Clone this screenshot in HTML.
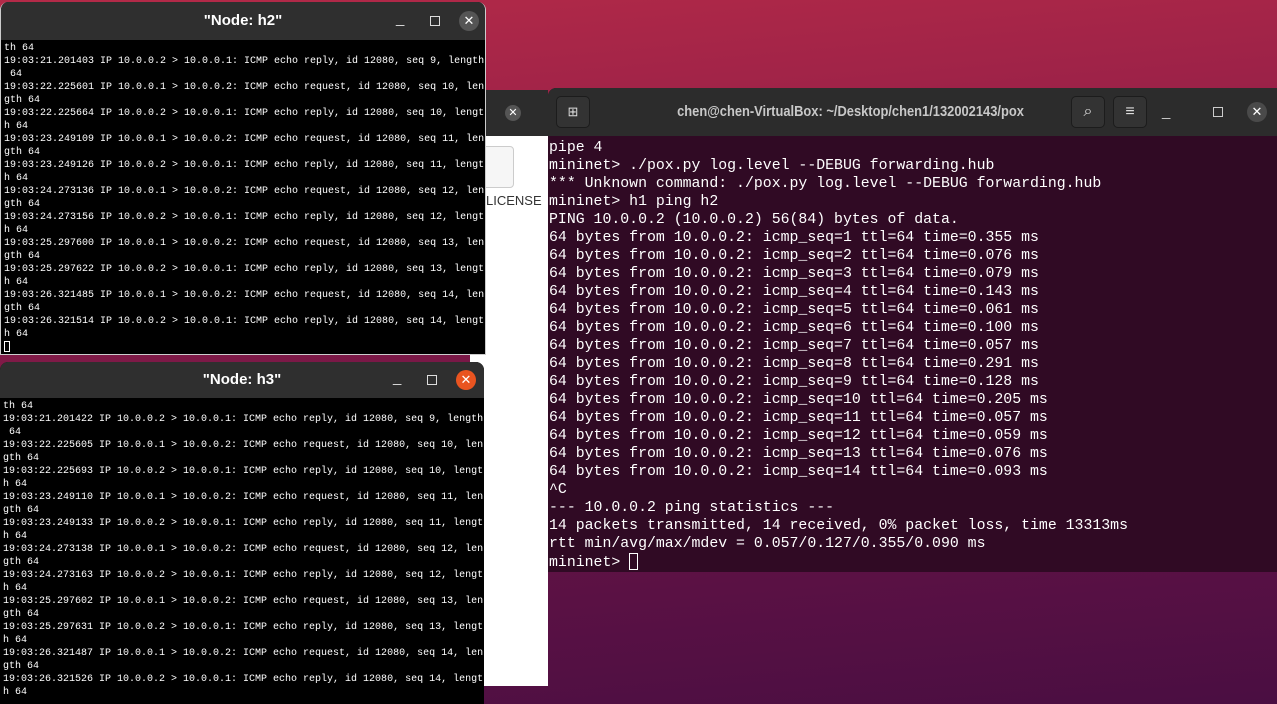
<!DOCTYPE html>
<html><head><meta charset="utf-8"><style>
*{margin:0;padding:0;box-sizing:border-box}
body{width:1277px;height:704px;overflow:hidden;position:relative;background:linear-gradient(175deg,#b42a48 0%,#9a2148 25%,#6a1446 60%,#4a0e42 100%);font-family:"Liberation Sans",sans-serif}
.win{position:absolute;background:#000;overflow:hidden}
.tb{position:absolute;left:0;right:0;top:0;background:#2f2f2f;color:#fff;font-weight:bold;font-size:15px;text-align:center}
.xt{position:absolute;left:0;right:0;bottom:0;color:#fff;font-family:"Liberation Mono",monospace;font-size:10px;line-height:13px;white-space:pre;padding-left:3px}
.cl{position:absolute;width:20px;height:20px;border-radius:50%;color:#fff;font-size:13px;line-height:20px;text-align:center;font-weight:normal}
.gt{position:absolute;left:548px;top:88px;width:729px;height:484px;background:#300a24;border-radius:8px 0 0 0;overflow:hidden}
.gtb{position:absolute;left:0;right:0;top:0;height:48px;background:#2c2c2c;color:#c8c8c8;font-weight:bold;font-size:15px;line-height:48px}
.btn{position:absolute;top:8px;width:34px;height:32px;border:1px solid #1c1c1c;background:#333;border-radius:5px;color:#ddd;text-align:center;line-height:30px;font-weight:normal}
.gtx{position:absolute;left:1px;top:51px;color:#fff;font-family:"Liberation Mono",monospace;font-size:14.85px;line-height:18px;white-space:pre}
</style></head><body>
<div style="position:absolute;left:470px;top:90px;width:78px;height:596px;background:#fff;border-radius:8px 0 0 0">
 <div style="position:absolute;left:0;right:0;top:0;height:46px;background:#2c2c2c"></div>
 <div style="position:absolute;left:35px;top:15px;width:16px;height:16px;border-radius:50%;background:#555;color:#fff;font-size:11px;text-align:center;line-height:16px">✕</div>
 <div style="position:absolute;left:8px;top:56px;width:36px;height:42px;border:1px solid #ccc;border-radius:4px;background:#f6f6f6"></div>
 <div style="position:absolute;left:16px;top:103px;font-size:13px;color:#333">LICENSE</div>
</div>
<div class="gt">
 <div class="gtb">
  <div style="position:absolute;left:100px;width:405px;text-align:center;font-size:15px;transform:scaleX(0.86);transform-origin:center;white-space:nowrap">chen@chen-VirtualBox: ~/Desktop/chen1/132002143/pox</div>
  <div class="btn" style="left:8px;font-size:13px">⊞</div>
  <div class="btn" style="left:523px;font-size:16px">⌕</div>
  <div class="btn" style="left:565px;font-size:16px">≡</div>
  <div style="position:absolute;left:614px;top:0;color:#ccc;font-weight:normal">_</div>
  <div style="position:absolute;left:665px;top:19px;width:10px;height:10px;border:1px solid #ccc"></div>
  <div class="cl" style="left:699px;top:14px;background:#4a4a4a">✕</div>
 </div>
 <div class="gtx">pipe 4
mininet&gt; ./pox.py log.level --DEBUG forwarding.hub
*** Unknown command: ./pox.py log.level --DEBUG forwarding.hub
mininet&gt; h1 ping h2
PING 10.0.0.2 (10.0.0.2) 56(84) bytes of data.
64 bytes from 10.0.0.2: icmp_seq=1 ttl=64 time=0.355 ms
64 bytes from 10.0.0.2: icmp_seq=2 ttl=64 time=0.076 ms
64 bytes from 10.0.0.2: icmp_seq=3 ttl=64 time=0.079 ms
64 bytes from 10.0.0.2: icmp_seq=4 ttl=64 time=0.143 ms
64 bytes from 10.0.0.2: icmp_seq=5 ttl=64 time=0.061 ms
64 bytes from 10.0.0.2: icmp_seq=6 ttl=64 time=0.100 ms
64 bytes from 10.0.0.2: icmp_seq=7 ttl=64 time=0.057 ms
64 bytes from 10.0.0.2: icmp_seq=8 ttl=64 time=0.291 ms
64 bytes from 10.0.0.2: icmp_seq=9 ttl=64 time=0.128 ms
64 bytes from 10.0.0.2: icmp_seq=10 ttl=64 time=0.205 ms
64 bytes from 10.0.0.2: icmp_seq=11 ttl=64 time=0.057 ms
64 bytes from 10.0.0.2: icmp_seq=12 ttl=64 time=0.059 ms
64 bytes from 10.0.0.2: icmp_seq=13 ttl=64 time=0.076 ms
64 bytes from 10.0.0.2: icmp_seq=14 ttl=64 time=0.093 ms
^C
--- 10.0.0.2 ping statistics ---
14 packets transmitted, 14 received, 0% packet loss, time 13313ms
rtt min/avg/max/mdev = 0.057/0.127/0.355/0.090 ms
mininet&gt; <span style="display:inline-block;width:9px;height:17px;border:1px solid #fff;vertical-align:-4px"></span></div>
</div>
<div class="win" style="left:0;top:2px;width:486px;height:353px;border-radius:8px 8px 0 0;border:1px solid #ccc;border-top:none">
 <div class="tb" style="height:38px;line-height:38px">"Node: h2"
  <div style="position:absolute;left:395px;top:-2px;font-weight:normal;color:#ddd">_</div>
  <div style="position:absolute;left:429px;top:14px;width:10px;height:10px;border:1px solid #ddd"></div>
  <div class="cl" style="left:458px;top:9px;background:#555">✕</div>
 </div>
 <div class="xt" style="top:38px;padding-top:2px">th 64
19:03:21.201403 IP 10.0.0.2 &gt; 10.0.0.1: ICMP echo reply, id 12080, seq 9, length
 64
19:03:22.225601 IP 10.0.0.1 &gt; 10.0.0.2: ICMP echo request, id 12080, seq 10, len
gth 64
19:03:22.225664 IP 10.0.0.2 &gt; 10.0.0.1: ICMP echo reply, id 12080, seq 10, lengt
h 64
19:03:23.249109 IP 10.0.0.1 &gt; 10.0.0.2: ICMP echo request, id 12080, seq 11, len
gth 64
19:03:23.249126 IP 10.0.0.2 &gt; 10.0.0.1: ICMP echo reply, id 12080, seq 11, lengt
h 64
19:03:24.273136 IP 10.0.0.1 &gt; 10.0.0.2: ICMP echo request, id 12080, seq 12, len
gth 64
19:03:24.273156 IP 10.0.0.2 &gt; 10.0.0.1: ICMP echo reply, id 12080, seq 12, lengt
h 64
19:03:25.297600 IP 10.0.0.1 &gt; 10.0.0.2: ICMP echo request, id 12080, seq 13, len
gth 64
19:03:25.297622 IP 10.0.0.2 &gt; 10.0.0.1: ICMP echo reply, id 12080, seq 13, lengt
h 64
19:03:26.321485 IP 10.0.0.1 &gt; 10.0.0.2: ICMP echo request, id 12080, seq 14, len
gth 64
19:03:26.321514 IP 10.0.0.2 &gt; 10.0.0.1: ICMP echo reply, id 12080, seq 14, lengt
h 64
<span style="display:inline-block;width:6px;height:11px;border:1px solid #fff"></span></div>
</div>
<div class="win" style="left:0;top:362px;width:484px;height:342px;border-radius:8px 8px 0 0">
 <div class="tb" style="height:36px;line-height:36px">"Node: h3"
  <div style="position:absolute;left:393px;top:-2px;font-weight:normal;color:#ddd">_</div>
  <div style="position:absolute;left:427px;top:13px;width:10px;height:10px;border:1px solid #ddd"></div>
  <div class="cl" style="left:456px;top:8px;background:#e95420">✕</div>
 </div>
 <div class="xt" style="top:36px;padding-top:2px">th 64
19:03:21.201422 IP 10.0.0.2 &gt; 10.0.0.1: ICMP echo reply, id 12080, seq 9, length
 64
19:03:22.225605 IP 10.0.0.1 &gt; 10.0.0.2: ICMP echo request, id 12080, seq 10, len
gth 64
19:03:22.225693 IP 10.0.0.2 &gt; 10.0.0.1: ICMP echo reply, id 12080, seq 10, lengt
h 64
19:03:23.249110 IP 10.0.0.1 &gt; 10.0.0.2: ICMP echo request, id 12080, seq 11, len
gth 64
19:03:23.249133 IP 10.0.0.2 &gt; 10.0.0.1: ICMP echo reply, id 12080, seq 11, lengt
h 64
19:03:24.273138 IP 10.0.0.1 &gt; 10.0.0.2: ICMP echo request, id 12080, seq 12, len
gth 64
19:03:24.273163 IP 10.0.0.2 &gt; 10.0.0.1: ICMP echo reply, id 12080, seq 12, lengt
h 64
19:03:25.297602 IP 10.0.0.1 &gt; 10.0.0.2: ICMP echo request, id 12080, seq 13, len
gth 64
19:03:25.297631 IP 10.0.0.2 &gt; 10.0.0.1: ICMP echo reply, id 12080, seq 13, lengt
h 64
19:03:26.321487 IP 10.0.0.1 &gt; 10.0.0.2: ICMP echo request, id 12080, seq 14, len
gth 64
19:03:26.321526 IP 10.0.0.2 &gt; 10.0.0.1: ICMP echo reply, id 12080, seq 14, lengt
h 64
</div>
</div>
</body></html>
